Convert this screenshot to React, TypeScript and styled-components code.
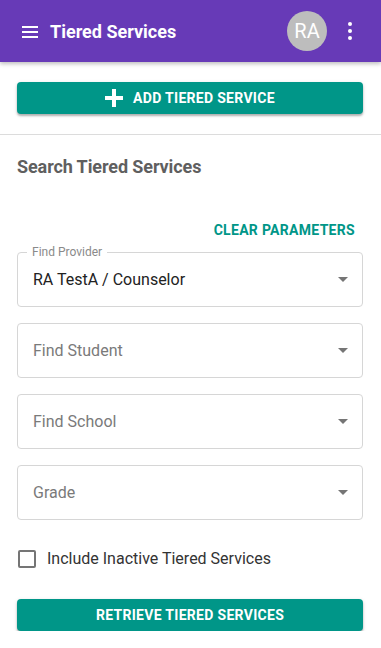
import styled, { createGlobalStyle } from 'styled-components';

const GlobalStyle = createGlobalStyle`
  body {
    margin: 0;
    font-family: Roboto, "Noto Sans", Arial, sans-serif;
    background: #fff;
  }
  * {
    box-sizing: border-box;
  }
`;

const fields = [
  { label: 'Find Provider', value: 'RA TestA / Counselor' },
  { label: 'Find Student' },
  { label: 'Find School' },
  { label: 'Grade' },
];

export default function App() {
  return (
    <>
      <GlobalStyle />
      <Header>
        <MenuIcon width='16' height='12' viewBox='0 0 16 12'>
          <rect x='0' y='0' width='16' height='2' fill='white' />
          <rect x='0' y='5' width='16' height='2' fill='white' />
          <rect x='0' y='10' width='16' height='2' fill='white' />
        </MenuIcon>
        <Title>Tiered Services</Title>
        <Avatar>RA</Avatar>
        <Kebab width='4' height='18' viewBox='0 0 4 18'>
          <circle cx='2' cy='2' r='2' fill='white' />
          <circle cx='2' cy='9' r='2' fill='white' />
          <circle cx='2' cy='16' r='2' fill='white' />
        </Kebab>
      </Header>

      <Top>
        <TealButton>
          <svg width='18' height='18' viewBox='0 0 18 18'>
            <rect x='7' y='0' width='4' height='18' fill='white' />
            <rect x='0' y='7' width='18' height='4' fill='white' />
          </svg>
          ADD TIERED SERVICE
        </TealButton>
      </Top>
      <Divider />

      <Section>
        <Heading>Search Tiered Services</Heading>
        <ClearRow>
          <TextButton>CLEAR PARAMETERS</TextButton>
        </ClearRow>
        <Fields>
          {fields.map((f) => (
            <Field key={f.label}>
              {f.value && <Legend>{f.label}</Legend>}
              <FieldText $filled={!!f.value}>{f.value ?? f.label}</FieldText>
              <Arrow width='10' height='5' viewBox='0 0 10 5'>
                <path d='M0 0 L10 0 L5 5 Z' fill='#757575' />
              </Arrow>
            </Field>
          ))}
        </Fields>
        <CheckRow>
          <Box />
          <span>Include Inactive Tiered Services</span>
        </CheckRow>
        <TealButton>RETRIEVE TIERED SERVICES</TealButton>
      </Section>
    </>
  );
}

const Header = styled.header`
  height: 62px;
  background: #673ab7;
  display: flex;
  align-items: center;
  padding: 0 22px;
  box-shadow: 0 2px 4px rgba(0, 0, 0, 0.25);
  position: relative;
`;

const MenuIcon = styled.svg`
  margin-top: 1px;
`;

const Title = styled.h1`
  margin: 0 0 0 12px;
  flex: 1;
  color: white;
  font-size: 18px;
  font-weight: 700;
`;

const Avatar = styled.div`
  width: 40px;
  height: 40px;
  border-radius: 50%;
  background: #bdbdbd;
  color: white;
  font-size: 20px;
  display: flex;
  align-items: center;
  justify-content: center;
`;

const Kebab = styled.svg`
  margin-left: 21px;
  margin-right: 7px;
`;

const Top = styled.div`
  padding: 20px 18px 20px 17px;
`;

const TealButton = styled.button`
  width: 100%;
  height: 32px;
  border: none;
  border-radius: 4px;
  background: #009688;
  color: white;
  font-family: inherit;
  font-size: 14px;
  font-weight: 700;
  letter-spacing: 0.3px;
  display: flex;
  align-items: center;
  justify-content: center;
  gap: 10px;
  box-shadow: 0 2px 2px rgba(0, 0, 0, 0.25), 0 1px 4px rgba(0, 0, 0, 0.12);
`;

const Divider = styled.hr`
  margin: 0;
  border: none;
  border-top: 1px solid #dcdcdc;
`;

const Section = styled.div`
  padding: 21px 18px 0 17px;
  display: flex;
  flex-direction: column;
`;

const Heading = styled.h2`
  margin: 0;
  font-size: 18px;
  font-weight: 700;
  letter-spacing: -0.1px;
  color: #5f5f5f;
`;

const ClearRow = styled.div`
  display: flex;
  justify-content: flex-end;
  margin-top: 45px;
  padding-right: 8px;
`;

const TextButton = styled.span`
  color: #009688;
  font-size: 14px;
  font-weight: 700;
  letter-spacing: 0.3px;
`;

const Fields = styled.div`
  margin-top: 14px;
  display: flex;
  flex-direction: column;
  gap: 16px;
`;

const Field = styled.div`
  position: relative;
  height: 55px;
  border: 1px solid #d6d6d6;
  border-radius: 4px;
  display: flex;
  align-items: center;
  padding: 0 15px;
`;

const Legend = styled.span`
  position: absolute;
  top: -8px;
  left: 9px;
  padding: 0 5px;
  background: white;
  font-size: 12px;
  color: #8a8a8a;
`;

const FieldText = styled.span<{ $filled: boolean }>`
  flex: 1;
  font-size: 16px;
  color: ${(p) => (p.$filled ? '#222' : '#7a7a7a')};
`;

const Arrow = styled.svg`
  margin-right: -1px;
`;

const CheckRow = styled.label`
  margin-top: 29px;
  margin-bottom: 31px;
  display: flex;
  align-items: center;
  gap: 11px;
  font-size: 16px;
  color: #333;
  padding-left: 1px;
`;

const Box = styled.span`
  width: 18px;
  height: 18px;
  border: 2px solid #757575;
  border-radius: 2px;
`;
